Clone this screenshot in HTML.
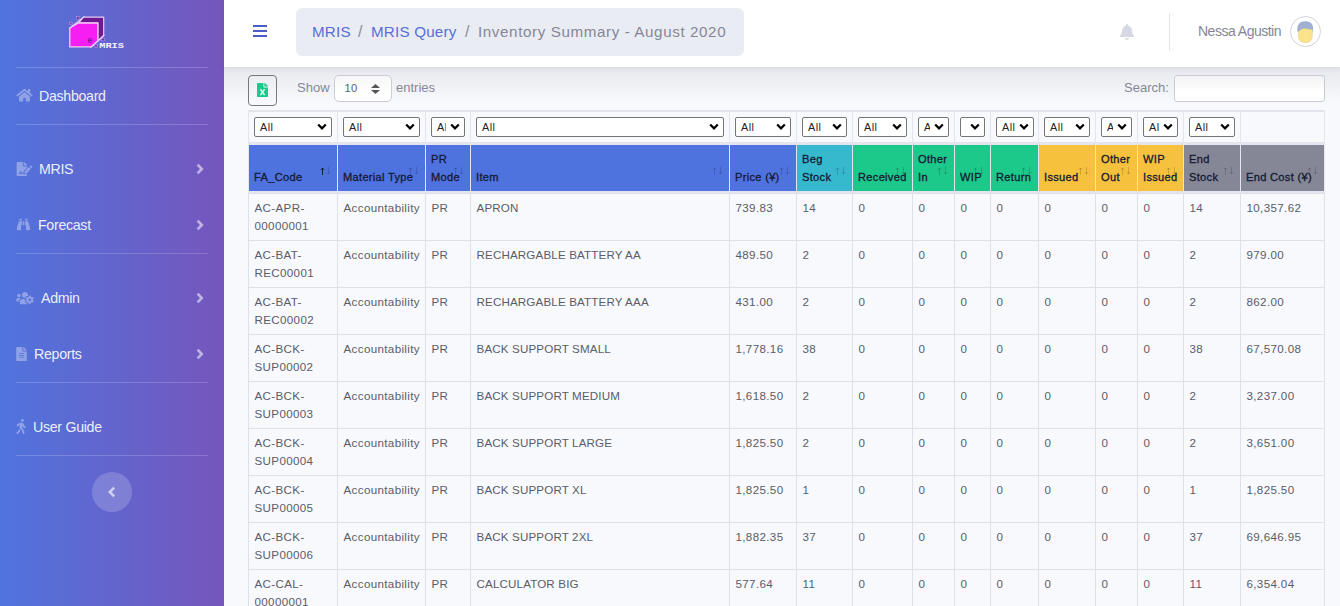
<!DOCTYPE html>
<html><head><meta charset="utf-8">
<style>
*{box-sizing:border-box;margin:0;padding:0}
html,body{width:1340px;height:606px;overflow:hidden}
body{font-family:"Liberation Sans",sans-serif;background:#f8f9fc;position:relative;color:#5a5c69}
#sb{position:absolute;left:0;top:0;width:224px;height:606px;background:linear-gradient(90deg,#5074de 0%,#7556bc 100%)}
.hr{position:absolute;left:16px;width:192px;height:1px;background:rgba(255,255,255,.18)}
.nav{position:absolute;color:rgba(255,255,255,.9);font-size:14.2px;letter-spacing:-.3px;line-height:18px;white-space:nowrap}
.ic{position:absolute}
.chev{position:absolute;left:196px;width:8px;height:12px}
#top{position:absolute;left:224px;top:0;width:1116px;height:67px;background:#fff;box-shadow:0 1px 6px rgba(58,59,69,.10)}
#tbl div{position:absolute}
#grad{position:absolute;left:224px;top:67px;width:1116px;height:36px;background:linear-gradient(180deg,#e8e9ee 0%,#f8f9fc 100%)}
.bcr{position:absolute;top:22px;font-size:15.2px;letter-spacing:.2px;line-height:20px;white-space:nowrap}
.lbl{position:absolute;top:80px;font-size:13px;line-height:15px;color:#858796;white-space:nowrap}
.fc{top:110px;height:33px;border:1px solid #e3e4ec;border-top:2px solid #e3e4ec;background:#f8f9fc}
.sel{top:117px;height:20px;border:1px solid #767676;border-radius:2px;background:#fff;overflow:hidden}
.st{position:absolute;left:5px;top:2px;font-size:10.8px;letter-spacing:.5px;line-height:14px;color:#222}
.cv{position:absolute;right:4px;top:5px;width:10px;height:7px;background:#fff;box-shadow:-2px 0 0 2px #fff}
.hc{top:143px;height:50px;border:1px solid #e3e6f0;border-top:2px solid #e3e6f0;border-bottom:2px solid #e3e6f0;color:#151934;font-size:11.1px;letter-spacing:.3px;line-height:18px;-webkit-text-stroke:.3px #151934}
.hc .l1{position:absolute;left:5px;top:5px}
.hc .l2{position:absolute;left:5px;top:23px;white-space:nowrap}
.hc .sa{position:absolute;right:6px;top:22px;width:11px;height:8px}
.hb{background:#4e73df}.hcn{background:#36b9cc}.hg{background:#1cc88a}.hy{background:#f6c23e}.hk{background:#858796}
.bc{height:48px;border:1px solid #e0e1e8;font-size:11.6px;letter-spacing:.35px;line-height:18px;padding:5px 0 0 5.5px;color:#5a5c69;background:#f8f9fc;white-space:nowrap}
</style></head><body>
<div id="sb">
  <svg style="position:absolute;left:60px;top:10px" width="70" height="45" viewBox="60 10 70 45">
    <path d="M83.5 17.2 L103.7 17.2 L103.7 35.5 L97.8 41 L97.8 23 L78.6 23 Z" fill="#6e1a8e" stroke="#e6c8f2" stroke-width="1.2" stroke-linejoin="round"/>
    <path d="M78.3 23 L97.8 23 L97.8 41 L91.5 46.8 L69.8 46.8 L69.8 28 Z" fill="#f61ef2" stroke="#f4cdf6" stroke-width="1.3"/>
    <path d="M84.5 16.4 L69.3 28.4" stroke="#e9cdf5" stroke-width="1.1"/>
    <path d="M104.3 35 L90.5 47.6" stroke="#e9cdf5" stroke-width="1.1"/>
    <rect x="76.4" y="16.6" width="2.6" height="2.6" fill="#6a2a9a" stroke="#c9a6e8" stroke-width=".5"/>
    <rect x="69.5" y="22.1" width="2.6" height="2.6" fill="#8a3ab0" stroke="#c9a6e8" stroke-width=".5"/>
    <rect x="101.7" y="38.3" width="2.6" height="2.6" fill="#6a2a9a" stroke="#c9a6e8" stroke-width=".5"/>
    <rect x="94.8" y="44.6" width="2.6" height="2.6" fill="#8a3ab0" stroke="#c9a6e8" stroke-width=".5"/>
    <text x="87.6" y="43.4" font-family="Liberation Sans" font-size="8.5" font-weight="bold" fill="#8e14a8">e</text>
    <text x="99.2" y="47.8" font-family="Liberation Mono" font-size="7.8" font-weight="bold" fill="#f6f4ff" textLength="24.8" lengthAdjust="spacingAndGlyphs">MRIS</text>
  </svg>
  <div class="hr" style="top:67px"></div>
  <div class="hr" style="top:124px"></div>
  <div class="hr" style="top:253px"></div>
  <div class="hr" style="top:382px"></div>
  <div class="hr" style="top:455px"></div>
  <!-- icons -->
  <svg class="ic" style="left:16px;top:88px" width="17" height="14.5" viewBox="0 0 576 512"><path fill="rgba(255,255,255,.35)" d="M280.37 148.26L96 300.11V464a16 16 0 0 0 16 16l112.06-.29a16 16 0 0 0 15.92-16V368a16 16 0 0 1 16-16h64a16 16 0 0 1 16 16v95.64a16 16 0 0 0 16 16.05L464 480a16 16 0 0 0 16-16V300L295.67 148.26a12.19 12.19 0 0 0-15.3 0zM571.6 251.47L488 182.56V44.05a12 12 0 0 0-12-12h-56a12 12 0 0 0-12 12v72.61L318.47 43a48 48 0 0 0-61 0L4.34 251.47a12 12 0 0 0-1.6 16.9l25.5 31A12 12 0 0 0 45.15 301l235.22-193.74a12.19 12.19 0 0 1 15.3 0L530.9 301a12 12 0 0 0 16.9-1.6l25.5-31a12 12 0 0 0-1.7-16.93z"/></svg>
  <div class="nav" style="top:87px;left:39px">Dashboard</div>
  <svg class="ic" style="left:16px;top:162px" width="17" height="14" viewBox="0 0 576 512"><path fill="rgba(255,255,255,.35)" d="M218.17 424.14c-2.95-5.92-8.09-6.52-10.17-6.52s-7.22.59-10.02 6.19l-7.67 15.34c-6.37 12.78-25.03 11.37-29.48-2.09L144 386.59l-10.61 31.88c-5.89 17.66-22.38 29.53-41 29.53H80c-8.84 0-16-7.16-16-16s7.16-16 16-16h12.39c4.83 0 9.11-3.08 10.64-7.66l18.19-54.64c3.3-9.81 12.44-16.41 22.78-16.41s19.48 6.59 22.77 16.41l13.88 41.64c19.75-16.19 54.06-9.7 66 14.16 1.89 3.78 5.49 5.95 9.36 6.26v-82.12l128-127.09V160H248c-13.2 0-24-10.8-24-24V0H24C10.7 0 0 10.7 0 24v464c0 13.3 10.7 24 24 24h336c13.3 0 24-10.7 24-24v-40l-128-.11c-16.12-.31-30.58-9.28-37.83-23.75zM384 121.9c0-6.3-2.5-12.4-7-16.9L279.1 7c-4.5-4.5-10.6-7-17-7H256v128h128v-6.1zm-96 225.06V416h68.99l161.68-162.78-67.88-67.88L288 346.96zm280.54-179.63l-31.87-31.87c-9.94-9.94-26.07-9.94-36.01 0l-27.25 27.25 67.88 67.88 27.25-27.25c9.95-9.94 9.95-26.07 0-36.01z"/></svg>
  <div class="nav" style="top:160px;left:39px">MRIS</div>
  <svg class="chev" style="top:163px" viewBox="0 0 8 12"><path d="M1.6 1.6L5.8 6L1.6 10.4" fill="none" stroke="rgba(255,255,255,.55)" stroke-width="2.6"/></svg>
  <svg class="ic" style="left:16px;top:218px" width="15" height="13" viewBox="0 0 512 512"><path fill="rgba(255,255,255,.35)" d="M416 48c0-8.84-7.16-16-16-16h-64c-8.84 0-16 7.16-16 16v48h96V48zM63.91 159.99C61.4 253.84 3.46 274.22 0 404v44c0 17.67 14.33 32 32 32h96c17.67 0 32-14.33 32-32V288h32V128H95.84c-17.63 0-31.45 14.37-31.93 31.99zm384.18 0c-.48-17.62-14.3-31.99-31.93-31.99H320v160h32v160c0 17.67 14.33 32 32 32h96c17.67 0 32-14.33 32-32v-44c-3.46-129.78-61.4-150.16-63.91-244.01zM176 32h-64c-8.84 0-16 7.16-16 16v48h96V48c0-8.84-7.16-16-16-16zm48 256h64V128h-64v160z"/></svg>
  <div class="nav" style="top:216px;left:38px">Forecast</div>
  <svg class="chev" style="top:219px" viewBox="0 0 8 12"><path d="M1.6 1.6L5.8 6L1.6 10.4" fill="none" stroke="rgba(255,255,255,.55)" stroke-width="2.6"/></svg>
  <svg class="ic" style="left:16px;top:291px" width="18" height="14" viewBox="0 0 640 512"><path fill="rgba(255,255,255,.35)" d="M610.5 341.3c2.6-14.1 2.6-28.5 0-42.6l25.8-14.9c3-1.7 4.3-5.2 3.3-8.5-6.7-21.6-18.2-41.2-33.2-57.4-2.3-2.5-6-3.1-9-1.4l-25.8 14.9c-10.9-9.3-23.4-16.5-36.9-21.3v-29.8c0-3.4-2.4-6.4-5.7-7.1-22.3-5-45-4.8-66.2 0-3.3.7-5.7 3.7-5.7 7.1v29.8c-13.5 4.8-26 12-36.9 21.3l-25.8-14.9c-2.9-1.7-6.7-1.1-9 1.4-15 16.2-26.5 35.8-33.2 57.4-1 3.3.4 6.8 3.3 8.5l25.8 14.9c-2.6 14.1-2.6 28.5 0 42.6l-25.8 14.9c-3 1.7-4.3 5.2-3.3 8.5 6.7 21.6 18.2 41.1 33.2 57.4 2.3 2.5 6 3.1 9 1.4l25.8-14.9c10.9 9.3 23.4 16.5 36.9 21.3v29.8c0 3.4 2.4 6.4 5.7 7.1 22.3 5 45 4.8 66.2 0 3.3-.7 5.7-3.7 5.7-7.1v-29.8c13.5-4.8 26-12 36.9-21.3l25.8 14.9c2.9 1.7 6.7 1.1 9-1.4 15-16.2 26.5-35.8 33.2-57.4 1-3.3-.4-6.8-3.3-8.5l-25.8-14.9zM496 368.5c-26.8 0-48.5-21.8-48.5-48.5s21.8-48.5 48.5-48.5 48.5 21.8 48.5 48.5-21.7 48.5-48.5 48.5zM96 224c35.3 0 64-28.7 64-64s-28.7-64-64-64-64 28.7-64 64 28.7 64 64 64zm224 32c1.9 0 3.7-.5 5.6-.6 8.3-21.7 20.5-42.1 36.3-59.2 7.4-8 17.9-12.6 28.9-12.6 6.9 0 13.7 1.8 19.6 5.3l7.9 4.6c.8-.5 1.6-.9 2.4-1.4 7-14.6 11.2-30.8 11.2-48 0-61.9-50.1-112-112-112S208 82.1 208 144c0 61.9 50.1 112 112 112zm105.2 194.5c-2.3-1.2-4.6-2.6-6.8-3.9-8.2 4.8-15.3 9.8-27.5 9.8-10.9 0-21.4-4.6-28.9-12.6-18.3-19.8-32.3-43.9-40.2-69.6-10.7-34.5 24.9-49.7 25.8-50.3-.1-2.6-.1-5.2 0-7.8l-7.9-4.6c-3.8-2.2-7-5-9.8-8.1-3.3.2-6.5.6-9.8.6-24.6 0-47.6-6-68.5-16h-8.3C179.6 288 128 339.6 128 403.2V432c0 26.5 21.5 48 48 48h255.4c-3.7-6-6.2-12.8-6.2-20.3v-9.2zM173.1 274.6C161.5 263.1 145.6 256 128 256H64c-35.3 0-64 28.7-64 64v32c0 17.7 14.3 32 32 32h65.9c6.3-47.4 34.9-87.3 75.2-109.4z"/></svg>
  <div class="nav" style="top:289px;left:41px">Admin</div>
  <svg class="chev" style="top:292px" viewBox="0 0 8 12"><path d="M1.6 1.6L5.8 6L1.6 10.4" fill="none" stroke="rgba(255,255,255,.55)" stroke-width="2.6"/></svg>
  <svg class="ic" style="left:16px;top:347px" width="11" height="14" viewBox="0 0 384 512"><path fill="rgba(255,255,255,.35)" d="M224 136V0H24C10.7 0 0 10.7 0 24v464c0 13.3 10.7 24 24 24h336c13.3 0 24-10.7 24-24V160H248c-13.2 0-24-10.8-24-24zm64 236c0 6.6-5.4 12-12 12H108c-6.6 0-12-5.4-12-12v-8c0-6.6 5.4-12 12-12h168c6.6 0 12 5.4 12 12v8zm0-64c0 6.6-5.4 12-12 12H108c-6.6 0-12-5.4-12-12v-8c0-6.6 5.4-12 12-12h168c6.6 0 12 5.4 12 12v8zm0-72v8c0 6.6-5.4 12-12 12H108c-6.6 0-12-5.4-12-12v-8c0-6.6 5.4-12 12-12h168c6.6 0 12 5.4 12 12zm96-114.1v6.1H256V0h6.1c6.4 0 12.5 2.5 17 7l97.9 98c4.5 4.5 7 10.6 7 16.9z"/></svg>
  <div class="nav" style="top:345px;left:34px">Reports</div>
  <svg class="chev" style="top:348px" viewBox="0 0 8 12"><path d="M1.6 1.6L5.8 6L1.6 10.4" fill="none" stroke="rgba(255,255,255,.55)" stroke-width="2.6"/></svg>
  <svg class="ic" style="left:16px;top:419px" width="10" height="15" viewBox="0 0 320 512"><path fill="rgba(255,255,255,.35)" d="M208 96c26.5 0 48-21.5 48-48S234.5 0 208 0s-48 21.5-48 48 21.5 48 48 48zm94.5 149.1l-23.3-11.8-9.7-29.4c-14.7-44.6-55.7-75.8-102.2-75.9-36-.1-55.9 10.1-93.3 25.2-21.6 8.7-39.3 25.2-49.7 46.2L17.6 213c-7.8 15.8-1.5 35 14.2 42.9 15.6 7.9 34.6 1.5 42.5-14.3L81 228c3.5-7 9.3-12.5 16.5-15.4l26.8-10.8-15.2 60.7c-5.2 20.8.4 42.9 14.9 58.8l59.9 65.4c7.2 7.9 12.3 17.4 14.9 27.7l18.3 73.3c4.3 17.1 21.7 27.6 38.8 23.3 17.1-4.3 27.6-21.7 23.3-38.8l-22.2-89c-2.6-10.3-7.7-19.9-14.9-27.7l-45.5-49.7 17.2-68.7 5.5 16.5c5.3 16.1 16.7 29.4 31.7 37l23.3 11.8c15.6 7.9 34.6 1.5 42.5-14.3 7.7-15.7 1.4-35.1-14.3-43zM73.6 385.8c-3.2 8.1-8 15.4-14.2 21.5l-50 50.1c-12.5 12.5-12.5 32.8 0 45.3s32.7 12.5 45.2 0l59.4-59.4c6.1-6.1 10.9-13.4 14.2-21.5l13.5-33.8c-55.3-60.3-38.7-41.8-47.4-53.7l-20.7 51.5z"/></svg>
  <div class="nav" style="top:418px;left:33px">User Guide</div>
  <div style="position:absolute;left:92px;top:472px;width:40px;height:40px;border-radius:50%;background:rgba(255,255,255,.18)"></div>
  <svg style="position:absolute;left:107px;top:486px" width="10" height="12" viewBox="0 0 10 12"><path d="M7.2 1.6L2.8 6L7.2 10.4" fill="none" stroke="rgba(255,255,255,.62)" stroke-width="2.6"/></svg>
</div>
<div id="grad"></div>
<div id="top">
  <div style="position:absolute;left:29px;top:25px;width:14px;height:2px;background:#4a5cc6;box-shadow:0 5px 0 #4a5cc6,0 10px 0 #4a5cc6"></div>
  <div style="position:absolute;left:72px;top:8px;width:448px;height:48px;background:#eaecf4;border-radius:6px"></div>
  <div class="bcr" style="left:88px;color:#5470d6">MRIS</div>
  <div class="bcr" style="left:134px;color:#8b8d99;font-size:16px">/</div>
  <div class="bcr" style="left:147px;color:#5470d6">MRIS Query</div>
  <div class="bcr" style="left:241px;color:#8b8d99;font-size:16px">/</div>
  <div class="bcr" style="left:254px;color:#858796;letter-spacing:.6px">Inventory Summary - August 2020</div>
  <svg style="position:absolute;left:896px;top:24px" width="14" height="16" viewBox="0 0 448 512"><path fill="#d6d8e4" d="M224 512c35.32 0 63.97-28.65 63.97-64H160.03c0 35.35 28.65 64 63.97 64zm215.39-149.71c-19.32-20.76-55.47-51.99-55.47-154.29 0-77.7-54.48-139.9-127.94-155.16V32c0-17.67-14.32-32-31.98-32s-31.98 14.33-31.98 32v20.84C118.56 68.1 64.08 130.3 64.08 208c0 102.3-36.15 133.53-55.47 154.29-6 6.45-8.66 14.16-8.61 21.71.11 16.4 12.98 32 32.1 32h383.8c19.12 0 32-15.6 32.1-32 .05-7.55-2.61-15.27-8.61-21.71z"/></svg>
  <div style="position:absolute;left:945px;top:13px;width:1px;height:38px;background:#e3e6f0"></div>
  <div style="position:absolute;left:974px;top:23px;font-size:14px;letter-spacing:-.5px;line-height:16px;color:#858796;white-space:nowrap">Nessa Agustin</div>
  <div style="position:absolute;left:1066px;top:16px;width:31px;height:31px;border-radius:50%;border:1px solid #d2d3da;background:#fff;overflow:hidden">
    <svg width="29" height="29" viewBox="0 0 29 29" style="position:absolute;left:0;top:0">
      <path d="M6.4 14 C5.8 7.5 9 4.3 14 4.3 C19 4.3 22.6 6.5 22.1 12.5 L21.6 15 Q14 13 6.9 15 Z" fill="#9fb0d2"/>
      <path d="M7.2 15 Q9.5 12.2 12.5 11.6 Q17 12.2 21.4 12.8 L21.4 19 Q21.2 25.8 14.3 25.8 Q7.4 25.8 7.2 19 Z" fill="#fae38a" stroke="#d8c98a" stroke-width=".4"/>
    </svg>
  </div>
</div>
<!-- controls -->
<div style="position:absolute;left:248px;top:75px;width:29px;height:31px;border:1px solid #76787f;border-radius:4px"></div>
<svg style="position:absolute;left:257px;top:83px" width="11" height="14" viewBox="0 0 384 512" preserveAspectRatio="none"><path fill="#1cc88a" d="M224 136V0H24C10.7 0 0 10.7 0 24v464c0 13.3 10.7 24 24 24h336c13.3 0 24-10.7 24-24V160H248c-13.2 0-24-10.8-24-24zm60.1 106.5L224 336l60.1 93.5c5.1 8-.6 18.5-10.1 18.5h-34.9c-4.4 0-8.5-2.4-10.6-6.3C208.9 405.5 192 373 192 373c-6.4 14.8-10 20-36.6 68.8-2.1 3.9-6.1 6.3-10.5 6.3H110c-9.5 0-15.2-10.5-10.1-18.5l60.3-93.5-60.3-93.5c-5.2-8 .6-18.5 10.1-18.5h34.8c4.4 0 8.5 2.4 10.6 6.3 26.1 48.8 20 33.6 36.6 68.5 0 0 6.1-11.7 36.6-68.5 2.1-3.9 6.2-6.3 10.6-6.3H274c9.5-.1 15.2 10.4 10.1 18.4zM384 121.9v6.1H256V0h6.1c6.4 0 12.5 2.5 17 7l97.9 98c4.5 4.5 7 10.6 7 16.9z"/></svg>
<div class="lbl" style="left:297px">Show</div>
<div style="position:absolute;left:334px;top:75px;width:58px;height:27px;border:1px solid #cbccd4;border-radius:5px;background:linear-gradient(180deg,#f6f6f8,#fff 70%)"></div>
<div class="lbl" style="left:344.5px;top:81px;color:#60626e;font-size:11.2px;letter-spacing:.4px">10</div>
<svg style="position:absolute;left:371px;top:84px" width="9" height="10" viewBox="0 0 9 10"><path d="M4.5 0 L9 4 L0 4 Z M0 6 L9 6 L4.5 10 Z" fill="#555"/></svg>
<div class="lbl" style="left:396px">entries</div>
<div class="lbl" style="left:1124px">Search:</div>
<div style="position:absolute;left:1174px;top:75px;width:151px;height:27px;border:1px solid #cbccd3;border-radius:3px;background:linear-gradient(180deg,#f3f3f6,#fff 60%)"></div>
<div id="tbl">
<div class="fc" style="left:248px;width:90px"></div>
<div class="sel" style="left:254px;width:78px"><span class="st">All</span><svg class="cv" viewBox="0 0 10 7"><path d="M1.2 1.4 L5 5.3 L8.8 1.4" fill="none" stroke="#000" stroke-width="2.2"/></svg></div>
<div class="fc" style="left:337px;width:89px"></div>
<div class="sel" style="left:343px;width:77px"><span class="st">All</span><svg class="cv" viewBox="0 0 10 7"><path d="M1.2 1.4 L5 5.3 L8.8 1.4" fill="none" stroke="#000" stroke-width="2.2"/></svg></div>
<div class="fc" style="left:425px;width:46px"></div>
<div class="sel" style="left:431px;width:34px"><span class="st">All</span><svg class="cv" viewBox="0 0 10 7"><path d="M1.2 1.4 L5 5.3 L8.8 1.4" fill="none" stroke="#000" stroke-width="2.2"/></svg></div>
<div class="fc" style="left:470px;width:260px"></div>
<div class="sel" style="left:476px;width:248px"><span class="st">All</span><svg class="cv" viewBox="0 0 10 7"><path d="M1.2 1.4 L5 5.3 L8.8 1.4" fill="none" stroke="#000" stroke-width="2.2"/></svg></div>
<div class="fc" style="left:729px;width:68px"></div>
<div class="sel" style="left:735px;width:56px"><span class="st">All</span><svg class="cv" viewBox="0 0 10 7"><path d="M1.2 1.4 L5 5.3 L8.8 1.4" fill="none" stroke="#000" stroke-width="2.2"/></svg></div>
<div class="fc" style="left:796px;width:57px"></div>
<div class="sel" style="left:802px;width:45px"><span class="st">All</span><svg class="cv" viewBox="0 0 10 7"><path d="M1.2 1.4 L5 5.3 L8.8 1.4" fill="none" stroke="#000" stroke-width="2.2"/></svg></div>
<div class="fc" style="left:852px;width:61px"></div>
<div class="sel" style="left:858px;width:49px"><span class="st">All</span><svg class="cv" viewBox="0 0 10 7"><path d="M1.2 1.4 L5 5.3 L8.8 1.4" fill="none" stroke="#000" stroke-width="2.2"/></svg></div>
<div class="fc" style="left:912px;width:43px"></div>
<div class="sel" style="left:918px;width:31px"><span class="st">All</span><svg class="cv" viewBox="0 0 10 7"><path d="M1.2 1.4 L5 5.3 L8.8 1.4" fill="none" stroke="#000" stroke-width="2.2"/></svg></div>
<div class="fc" style="left:954px;width:37px"></div>
<div class="sel" style="left:960px;width:25px"><span class="st">All</span><svg class="cv" viewBox="0 0 10 7"><path d="M1.2 1.4 L5 5.3 L8.8 1.4" fill="none" stroke="#000" stroke-width="2.2"/></svg></div>
<div class="fc" style="left:990px;width:49px"></div>
<div class="sel" style="left:996px;width:38px"><span class="st">All</span><svg class="cv" viewBox="0 0 10 7"><path d="M1.2 1.4 L5 5.3 L8.8 1.4" fill="none" stroke="#000" stroke-width="2.2"/></svg></div>
<div class="fc" style="left:1038px;width:58px"></div>
<div class="sel" style="left:1044px;width:46px"><span class="st">All</span><svg class="cv" viewBox="0 0 10 7"><path d="M1.2 1.4 L5 5.3 L8.8 1.4" fill="none" stroke="#000" stroke-width="2.2"/></svg></div>
<div class="fc" style="left:1095px;width:43px"></div>
<div class="sel" style="left:1101px;width:31px"><span class="st">All</span><svg class="cv" viewBox="0 0 10 7"><path d="M1.2 1.4 L5 5.3 L8.8 1.4" fill="none" stroke="#000" stroke-width="2.2"/></svg></div>
<div class="fc" style="left:1137px;width:47px"></div>
<div class="sel" style="left:1143px;width:35px"><span class="st">All</span><svg class="cv" viewBox="0 0 10 7"><path d="M1.2 1.4 L5 5.3 L8.8 1.4" fill="none" stroke="#000" stroke-width="2.2"/></svg></div>
<div class="fc" style="left:1183px;width:58px"></div>
<div class="sel" style="left:1189px;width:46px"><span class="st">All</span><svg class="cv" viewBox="0 0 10 7"><path d="M1.2 1.4 L5 5.3 L8.8 1.4" fill="none" stroke="#000" stroke-width="2.2"/></svg></div>
<div class="fc" style="left:1240px;width:85px"></div>
<div class="hc hb" style="left:248px;width:90px"><span class="l1"></span><span class="l2">FA_Code</span><svg class="sa" viewBox="0 0 11 8"><path d="M2.5 8V1M0.8 2.8L2.5 1L4.2 2.8" stroke="#181c3a" stroke-width="1" fill="none"/><path d="M8.5 0V7M6.8 5.2L8.5 7L10.2 5.2" stroke="rgba(0,0,0,.16)" stroke-width="1" fill="none"/></svg></div>
<div class="hc hb" style="left:337px;width:89px"><span class="l1"></span><span class="l2">Material Type</span><svg class="sa" viewBox="0 0 11 8"><path d="M2.5 8V1M0.8 2.8L2.5 1L4.2 2.8" stroke="rgba(0,0,0,.16)" stroke-width="1" fill="none"/><path d="M8.5 0V7M6.8 5.2L8.5 7L10.2 5.2" stroke="rgba(0,0,0,.16)" stroke-width="1" fill="none"/></svg></div>
<div class="hc hb" style="left:425px;width:46px"><span class="l1">PR</span><span class="l2">Mode</span><svg class="sa" viewBox="0 0 11 8"><path d="M2.5 8V1M0.8 2.8L2.5 1L4.2 2.8" stroke="rgba(0,0,0,.16)" stroke-width="1" fill="none"/><path d="M8.5 0V7M6.8 5.2L8.5 7L10.2 5.2" stroke="rgba(0,0,0,.16)" stroke-width="1" fill="none"/></svg></div>
<div class="hc hb" style="left:470px;width:260px"><span class="l1"></span><span class="l2">Item</span><svg class="sa" viewBox="0 0 11 8"><path d="M2.5 8V1M0.8 2.8L2.5 1L4.2 2.8" stroke="rgba(0,0,0,.16)" stroke-width="1" fill="none"/><path d="M8.5 0V7M6.8 5.2L8.5 7L10.2 5.2" stroke="rgba(0,0,0,.16)" stroke-width="1" fill="none"/></svg></div>
<div class="hc hb" style="left:729px;width:68px"><span class="l1"></span><span class="l2">Price (&yen;)</span><svg class="sa" viewBox="0 0 11 8"><path d="M2.5 8V1M0.8 2.8L2.5 1L4.2 2.8" stroke="rgba(0,0,0,.16)" stroke-width="1" fill="none"/><path d="M8.5 0V7M6.8 5.2L8.5 7L10.2 5.2" stroke="rgba(0,0,0,.16)" stroke-width="1" fill="none"/></svg></div>
<div class="hc hcn" style="left:796px;width:57px"><span class="l1">Beg</span><span class="l2">Stock</span><svg class="sa" viewBox="0 0 11 8"><path d="M2.5 8V1M0.8 2.8L2.5 1L4.2 2.8" stroke="rgba(0,0,0,.16)" stroke-width="1" fill="none"/><path d="M8.5 0V7M6.8 5.2L8.5 7L10.2 5.2" stroke="rgba(0,0,0,.16)" stroke-width="1" fill="none"/></svg></div>
<div class="hc hg" style="left:852px;width:61px"><span class="l1"></span><span class="l2">Received</span><svg class="sa" viewBox="0 0 11 8"><path d="M2.5 8V1M0.8 2.8L2.5 1L4.2 2.8" stroke="rgba(0,0,0,.16)" stroke-width="1" fill="none"/><path d="M8.5 0V7M6.8 5.2L8.5 7L10.2 5.2" stroke="rgba(0,0,0,.16)" stroke-width="1" fill="none"/></svg></div>
<div class="hc hg" style="left:912px;width:43px"><span class="l1">Other</span><span class="l2">In</span><svg class="sa" viewBox="0 0 11 8"><path d="M2.5 8V1M0.8 2.8L2.5 1L4.2 2.8" stroke="rgba(0,0,0,.16)" stroke-width="1" fill="none"/><path d="M8.5 0V7M6.8 5.2L8.5 7L10.2 5.2" stroke="rgba(0,0,0,.16)" stroke-width="1" fill="none"/></svg></div>
<div class="hc hg" style="left:954px;width:37px"><span class="l1"></span><span class="l2">WIP</span><svg class="sa" viewBox="0 0 11 8"><path d="M2.5 8V1M0.8 2.8L2.5 1L4.2 2.8" stroke="rgba(0,0,0,.16)" stroke-width="1" fill="none"/><path d="M8.5 0V7M6.8 5.2L8.5 7L10.2 5.2" stroke="rgba(0,0,0,.16)" stroke-width="1" fill="none"/></svg></div>
<div class="hc hg" style="left:990px;width:49px"><span class="l1"></span><span class="l2">Return</span><svg class="sa" viewBox="0 0 11 8"><path d="M2.5 8V1M0.8 2.8L2.5 1L4.2 2.8" stroke="rgba(0,0,0,.16)" stroke-width="1" fill="none"/><path d="M8.5 0V7M6.8 5.2L8.5 7L10.2 5.2" stroke="rgba(0,0,0,.16)" stroke-width="1" fill="none"/></svg></div>
<div class="hc hy" style="left:1038px;width:58px"><span class="l1"></span><span class="l2">Issued</span><svg class="sa" viewBox="0 0 11 8"><path d="M2.5 8V1M0.8 2.8L2.5 1L4.2 2.8" stroke="rgba(0,0,0,.16)" stroke-width="1" fill="none"/><path d="M8.5 0V7M6.8 5.2L8.5 7L10.2 5.2" stroke="rgba(0,0,0,.16)" stroke-width="1" fill="none"/></svg></div>
<div class="hc hy" style="left:1095px;width:43px"><span class="l1">Other</span><span class="l2">Out</span><svg class="sa" viewBox="0 0 11 8"><path d="M2.5 8V1M0.8 2.8L2.5 1L4.2 2.8" stroke="rgba(0,0,0,.16)" stroke-width="1" fill="none"/><path d="M8.5 0V7M6.8 5.2L8.5 7L10.2 5.2" stroke="rgba(0,0,0,.16)" stroke-width="1" fill="none"/></svg></div>
<div class="hc hy" style="left:1137px;width:47px"><span class="l1">WIP</span><span class="l2">Issued</span><svg class="sa" viewBox="0 0 11 8"><path d="M2.5 8V1M0.8 2.8L2.5 1L4.2 2.8" stroke="rgba(0,0,0,.16)" stroke-width="1" fill="none"/><path d="M8.5 0V7M6.8 5.2L8.5 7L10.2 5.2" stroke="rgba(0,0,0,.16)" stroke-width="1" fill="none"/></svg></div>
<div class="hc hk" style="left:1183px;width:58px"><span class="l1">End</span><span class="l2">Stock</span><svg class="sa" viewBox="0 0 11 8"><path d="M2.5 8V1M0.8 2.8L2.5 1L4.2 2.8" stroke="rgba(0,0,0,.16)" stroke-width="1" fill="none"/><path d="M8.5 0V7M6.8 5.2L8.5 7L10.2 5.2" stroke="rgba(0,0,0,.16)" stroke-width="1" fill="none"/></svg></div>
<div class="hc hk" style="left:1240px;width:85px"><span class="l1"></span><span class="l2">End Cost (&yen;)</span><svg class="sa" viewBox="0 0 11 8"><path d="M2.5 8V1M0.8 2.8L2.5 1L4.2 2.8" stroke="rgba(0,0,0,.16)" stroke-width="1" fill="none"/><path d="M8.5 0V7M6.8 5.2L8.5 7L10.2 5.2" stroke="rgba(0,0,0,.16)" stroke-width="1" fill="none"/></svg></div>
<div class="bc" style="left:248px;top:193px;width:90px">AC-APR-<br>00000001</div>
<div class="bc" style="left:337px;top:193px;width:89px">Accountability</div>
<div class="bc" style="left:425px;top:193px;width:46px">PR</div>
<div class="bc" style="left:470px;top:193px;width:260px;letter-spacing:0.15px">APRON</div>
<div class="bc" style="left:729px;top:193px;width:68px">739.83</div>
<div class="bc" style="left:796px;top:193px;width:57px">14</div>
<div class="bc" style="left:852px;top:193px;width:61px">0</div>
<div class="bc" style="left:912px;top:193px;width:43px">0</div>
<div class="bc" style="left:954px;top:193px;width:37px">0</div>
<div class="bc" style="left:990px;top:193px;width:49px">0</div>
<div class="bc" style="left:1038px;top:193px;width:58px">0</div>
<div class="bc" style="left:1095px;top:193px;width:43px">0</div>
<div class="bc" style="left:1137px;top:193px;width:47px">0</div>
<div class="bc" style="left:1183px;top:193px;width:58px">14</div>
<div class="bc" style="left:1240px;top:193px;width:85px">10,357.62</div>
<div class="bc" style="left:248px;top:240px;width:90px">AC-BAT-<br>REC00001</div>
<div class="bc" style="left:337px;top:240px;width:89px">Accountability</div>
<div class="bc" style="left:425px;top:240px;width:46px">PR</div>
<div class="bc" style="left:470px;top:240px;width:260px;letter-spacing:0.15px">RECHARGABLE BATTERY AA</div>
<div class="bc" style="left:729px;top:240px;width:68px">489.50</div>
<div class="bc" style="left:796px;top:240px;width:57px">2</div>
<div class="bc" style="left:852px;top:240px;width:61px">0</div>
<div class="bc" style="left:912px;top:240px;width:43px">0</div>
<div class="bc" style="left:954px;top:240px;width:37px">0</div>
<div class="bc" style="left:990px;top:240px;width:49px">0</div>
<div class="bc" style="left:1038px;top:240px;width:58px">0</div>
<div class="bc" style="left:1095px;top:240px;width:43px">0</div>
<div class="bc" style="left:1137px;top:240px;width:47px">0</div>
<div class="bc" style="left:1183px;top:240px;width:58px">2</div>
<div class="bc" style="left:1240px;top:240px;width:85px">979.00</div>
<div class="bc" style="left:248px;top:287px;width:90px">AC-BAT-<br>REC00002</div>
<div class="bc" style="left:337px;top:287px;width:89px">Accountability</div>
<div class="bc" style="left:425px;top:287px;width:46px">PR</div>
<div class="bc" style="left:470px;top:287px;width:260px;letter-spacing:0.15px">RECHARGABLE BATTERY AAA</div>
<div class="bc" style="left:729px;top:287px;width:68px">431.00</div>
<div class="bc" style="left:796px;top:287px;width:57px">2</div>
<div class="bc" style="left:852px;top:287px;width:61px">0</div>
<div class="bc" style="left:912px;top:287px;width:43px">0</div>
<div class="bc" style="left:954px;top:287px;width:37px">0</div>
<div class="bc" style="left:990px;top:287px;width:49px">0</div>
<div class="bc" style="left:1038px;top:287px;width:58px">0</div>
<div class="bc" style="left:1095px;top:287px;width:43px">0</div>
<div class="bc" style="left:1137px;top:287px;width:47px">0</div>
<div class="bc" style="left:1183px;top:287px;width:58px">2</div>
<div class="bc" style="left:1240px;top:287px;width:85px">862.00</div>
<div class="bc" style="left:248px;top:334px;width:90px">AC-BCK-<br>SUP00002</div>
<div class="bc" style="left:337px;top:334px;width:89px">Accountability</div>
<div class="bc" style="left:425px;top:334px;width:46px">PR</div>
<div class="bc" style="left:470px;top:334px;width:260px;letter-spacing:0.15px">BACK SUPPORT SMALL</div>
<div class="bc" style="left:729px;top:334px;width:68px">1,778.16</div>
<div class="bc" style="left:796px;top:334px;width:57px">38</div>
<div class="bc" style="left:852px;top:334px;width:61px">0</div>
<div class="bc" style="left:912px;top:334px;width:43px">0</div>
<div class="bc" style="left:954px;top:334px;width:37px">0</div>
<div class="bc" style="left:990px;top:334px;width:49px">0</div>
<div class="bc" style="left:1038px;top:334px;width:58px">0</div>
<div class="bc" style="left:1095px;top:334px;width:43px">0</div>
<div class="bc" style="left:1137px;top:334px;width:47px">0</div>
<div class="bc" style="left:1183px;top:334px;width:58px">38</div>
<div class="bc" style="left:1240px;top:334px;width:85px">67,570.08</div>
<div class="bc" style="left:248px;top:381px;width:90px">AC-BCK-<br>SUP00003</div>
<div class="bc" style="left:337px;top:381px;width:89px">Accountability</div>
<div class="bc" style="left:425px;top:381px;width:46px">PR</div>
<div class="bc" style="left:470px;top:381px;width:260px;letter-spacing:0.15px">BACK SUPPORT MEDIUM</div>
<div class="bc" style="left:729px;top:381px;width:68px">1,618.50</div>
<div class="bc" style="left:796px;top:381px;width:57px">2</div>
<div class="bc" style="left:852px;top:381px;width:61px">0</div>
<div class="bc" style="left:912px;top:381px;width:43px">0</div>
<div class="bc" style="left:954px;top:381px;width:37px">0</div>
<div class="bc" style="left:990px;top:381px;width:49px">0</div>
<div class="bc" style="left:1038px;top:381px;width:58px">0</div>
<div class="bc" style="left:1095px;top:381px;width:43px">0</div>
<div class="bc" style="left:1137px;top:381px;width:47px">0</div>
<div class="bc" style="left:1183px;top:381px;width:58px">2</div>
<div class="bc" style="left:1240px;top:381px;width:85px">3,237.00</div>
<div class="bc" style="left:248px;top:428px;width:90px">AC-BCK-<br>SUP00004</div>
<div class="bc" style="left:337px;top:428px;width:89px">Accountability</div>
<div class="bc" style="left:425px;top:428px;width:46px">PR</div>
<div class="bc" style="left:470px;top:428px;width:260px;letter-spacing:0.15px">BACK SUPPORT LARGE</div>
<div class="bc" style="left:729px;top:428px;width:68px">1,825.50</div>
<div class="bc" style="left:796px;top:428px;width:57px">2</div>
<div class="bc" style="left:852px;top:428px;width:61px">0</div>
<div class="bc" style="left:912px;top:428px;width:43px">0</div>
<div class="bc" style="left:954px;top:428px;width:37px">0</div>
<div class="bc" style="left:990px;top:428px;width:49px">0</div>
<div class="bc" style="left:1038px;top:428px;width:58px">0</div>
<div class="bc" style="left:1095px;top:428px;width:43px">0</div>
<div class="bc" style="left:1137px;top:428px;width:47px">0</div>
<div class="bc" style="left:1183px;top:428px;width:58px">2</div>
<div class="bc" style="left:1240px;top:428px;width:85px">3,651.00</div>
<div class="bc" style="left:248px;top:475px;width:90px">AC-BCK-<br>SUP00005</div>
<div class="bc" style="left:337px;top:475px;width:89px">Accountability</div>
<div class="bc" style="left:425px;top:475px;width:46px">PR</div>
<div class="bc" style="left:470px;top:475px;width:260px;letter-spacing:0.15px">BACK SUPPORT XL</div>
<div class="bc" style="left:729px;top:475px;width:68px">1,825.50</div>
<div class="bc" style="left:796px;top:475px;width:57px">1</div>
<div class="bc" style="left:852px;top:475px;width:61px">0</div>
<div class="bc" style="left:912px;top:475px;width:43px">0</div>
<div class="bc" style="left:954px;top:475px;width:37px">0</div>
<div class="bc" style="left:990px;top:475px;width:49px">0</div>
<div class="bc" style="left:1038px;top:475px;width:58px">0</div>
<div class="bc" style="left:1095px;top:475px;width:43px">0</div>
<div class="bc" style="left:1137px;top:475px;width:47px">0</div>
<div class="bc" style="left:1183px;top:475px;width:58px">1</div>
<div class="bc" style="left:1240px;top:475px;width:85px">1,825.50</div>
<div class="bc" style="left:248px;top:522px;width:90px">AC-BCK-<br>SUP00006</div>
<div class="bc" style="left:337px;top:522px;width:89px">Accountability</div>
<div class="bc" style="left:425px;top:522px;width:46px">PR</div>
<div class="bc" style="left:470px;top:522px;width:260px;letter-spacing:0.15px">BACK SUPPORT 2XL</div>
<div class="bc" style="left:729px;top:522px;width:68px">1,882.35</div>
<div class="bc" style="left:796px;top:522px;width:57px">37</div>
<div class="bc" style="left:852px;top:522px;width:61px">0</div>
<div class="bc" style="left:912px;top:522px;width:43px">0</div>
<div class="bc" style="left:954px;top:522px;width:37px">0</div>
<div class="bc" style="left:990px;top:522px;width:49px">0</div>
<div class="bc" style="left:1038px;top:522px;width:58px">0</div>
<div class="bc" style="left:1095px;top:522px;width:43px">0</div>
<div class="bc" style="left:1137px;top:522px;width:47px">0</div>
<div class="bc" style="left:1183px;top:522px;width:58px">37</div>
<div class="bc" style="left:1240px;top:522px;width:85px">69,646.95</div>
<div class="bc" style="left:248px;top:569px;width:90px">AC-CAL-<br>00000001</div>
<div class="bc" style="left:337px;top:569px;width:89px">Accountability</div>
<div class="bc" style="left:425px;top:569px;width:46px">PR</div>
<div class="bc" style="left:470px;top:569px;width:260px;letter-spacing:0.15px">CALCULATOR BIG</div>
<div class="bc" style="left:729px;top:569px;width:68px">577.64</div>
<div class="bc" style="left:796px;top:569px;width:57px">11</div>
<div class="bc" style="left:852px;top:569px;width:61px">0</div>
<div class="bc" style="left:912px;top:569px;width:43px">0</div>
<div class="bc" style="left:954px;top:569px;width:37px">0</div>
<div class="bc" style="left:990px;top:569px;width:49px">0</div>
<div class="bc" style="left:1038px;top:569px;width:58px">0</div>
<div class="bc" style="left:1095px;top:569px;width:43px">0</div>
<div class="bc" style="left:1137px;top:569px;width:47px">0</div>
<div class="bc" style="left:1183px;top:569px;width:58px">11</div>
<div class="bc" style="left:1240px;top:569px;width:85px">6,354.04</div>
</div>
</body></html>
